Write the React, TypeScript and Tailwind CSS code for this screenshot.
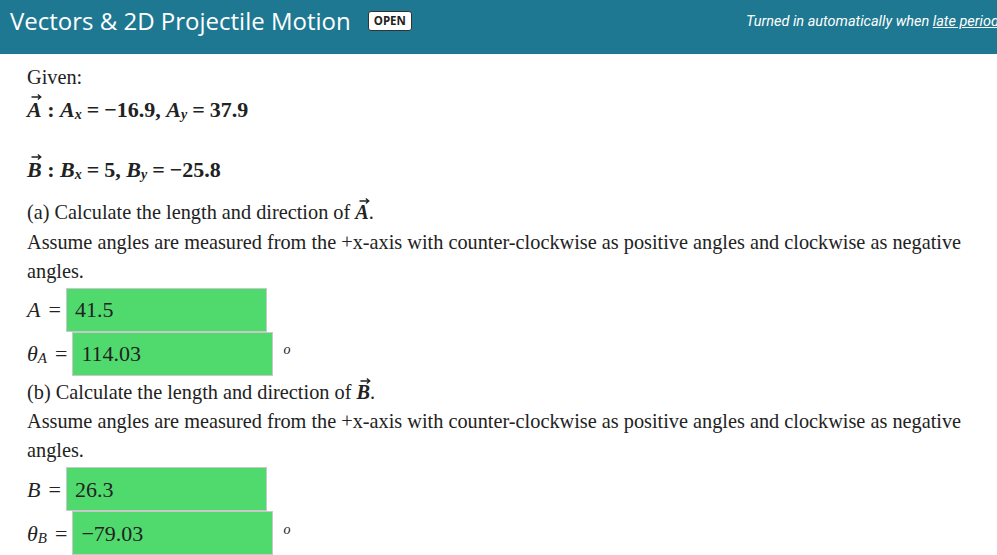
import React from "react";

const serif = { fontFamily: '"Liberation Serif", "DejaVu Serif", serif' };

function Vec({ l, top }: { l: string; top: number }) {
  return (
    <span className="relative inline-block italic leading-none">
      {l}
      <svg className="absolute left-[4px]" style={{ top }} width="11" height="6" viewBox="0 0 11 6">
        <path d="M0.5 3 H9.5 M6.8 0.6 L9.8 3 L6.8 5.4" stroke="#222" strokeWidth="1.3" fill="none" />
      </svg>
    </span>
  );
}

function V({ c, s }: { c: string; s?: string }) {
  return (
    <span>
      <span className="italic">{c}</span>
      {s && <sub className="italic text-[14px] relative top-[2px]">{s}</sub>}
    </span>
  );
}

function Eq() {
  return <span className="mx-[5px]">=</span>;
}

function Field({ label, sub, value, deg }: { label: string; sub?: string; value: string; deg?: boolean }) {
  return (
    <div className="flex items-center h-[44px]">
      <span className="text-[22px] text-[#222] mr-[5px] whitespace-nowrap" style={serif}>
        <span className="italic">{label}</span>
        {sub && <sub className="italic text-[15px] relative top-[2px]">{sub}</sub>}
        <span className="ml-[8px]">=</span>
      </span>
      <div
        className="w-[201px] h-[44px] bg-[#50da6e] border border-[#c8c8c8] flex items-center pl-[8px] text-[22px] text-[#222]"
        style={serif}
      >
        {value}
      </div>
      {deg && (
        <span className="italic text-[14px] ml-[10px] -mt-[8px] text-[#222]" style={serif}>
          o
        </span>
      )}
    </div>
  );
}

const assume =
  "Assume angles are measured from the +x-axis with counter-clockwise as positive angles and clockwise as negative angles.";

export default function App() {
  return (
    <div className="w-[997px] h-[555px] overflow-hidden bg-white">
      <div className="h-[54px] bg-[#1e7891] flex items-start pt-[3px] overflow-hidden whitespace-nowrap">
        <div className="w-[746px] shrink-0 flex items-center pl-[10px]">
          <span className="text-[24px] text-white" style={{ fontFamily: '"Open Sans", sans-serif' }}>
            Vectors &amp; 2D Projectile Motion
          </span>
          <span
            className="ml-[17px] bg-white border border-[#333] rounded-[3px] px-[5px] h-[20px] flex items-center text-[11.5px] font-bold text-[#222] leading-none"
            style={{ fontFamily: '"Open Sans", sans-serif' }}
          >
            OPEN
          </span>
        </div>
        <span className="shrink-0 mt-[8px] italic text-[14.5px] text-white" style={{ fontFamily: "Roboto, sans-serif" }}>
          Turned in automatically when <span className="underline">late period ends</span>
        </span>
      </div>

      <div className="pl-[27px] pt-[9px] text-[#222]" style={serif}>
        <div className="text-[20.3px] leading-[29px]">Given:</div>
        <div className="text-[22px] leading-[34px] font-bold mt-[1px]">
          <Vec l="A" top={-5} /> : <V c="A" s="x" />
          <Eq />
          −16.9, <V c="A" s="y" />
          <Eq />
          37.9
        </div>
        <div className="text-[22px] leading-[34px] font-bold mt-[26px]">
          <Vec l="B" top={-5} /> : <V c="B" s="x" />
          <Eq />
          5, <V c="B" s="y" />
          <Eq />
          −25.8
        </div>

        <div className="text-[20.3px] leading-[29.5px] mt-[11px]">
          (a) Calculate the length and direction of{" "}
          <span className="font-bold">
            <Vec l="A" top={-4} />
          </span>
          .
        </div>
        <div className="text-[20.3px] leading-[29px] w-[945px]">{assume}</div>
        <div className="mt-[2px]">
          <Field label="A" value="41.5" />
          <Field label="θ" sub="A" value="114.03" deg />
        </div>

        <div className="text-[20.3px] leading-[29.5px] mt-[2px]">
          (b) Calculate the length and direction of{" "}
          <span className="font-bold">
            <Vec l="B" top={-4} />
          </span>
          .
        </div>
        <div className="text-[20.3px] leading-[29px] w-[945px]">{assume}</div>
        <div className="mt-[2px]">
          <Field label="B" value="26.3" />
          <Field label="θ" sub="B" value="−79.03" deg />
        </div>
      </div>
    </div>
  );
}
